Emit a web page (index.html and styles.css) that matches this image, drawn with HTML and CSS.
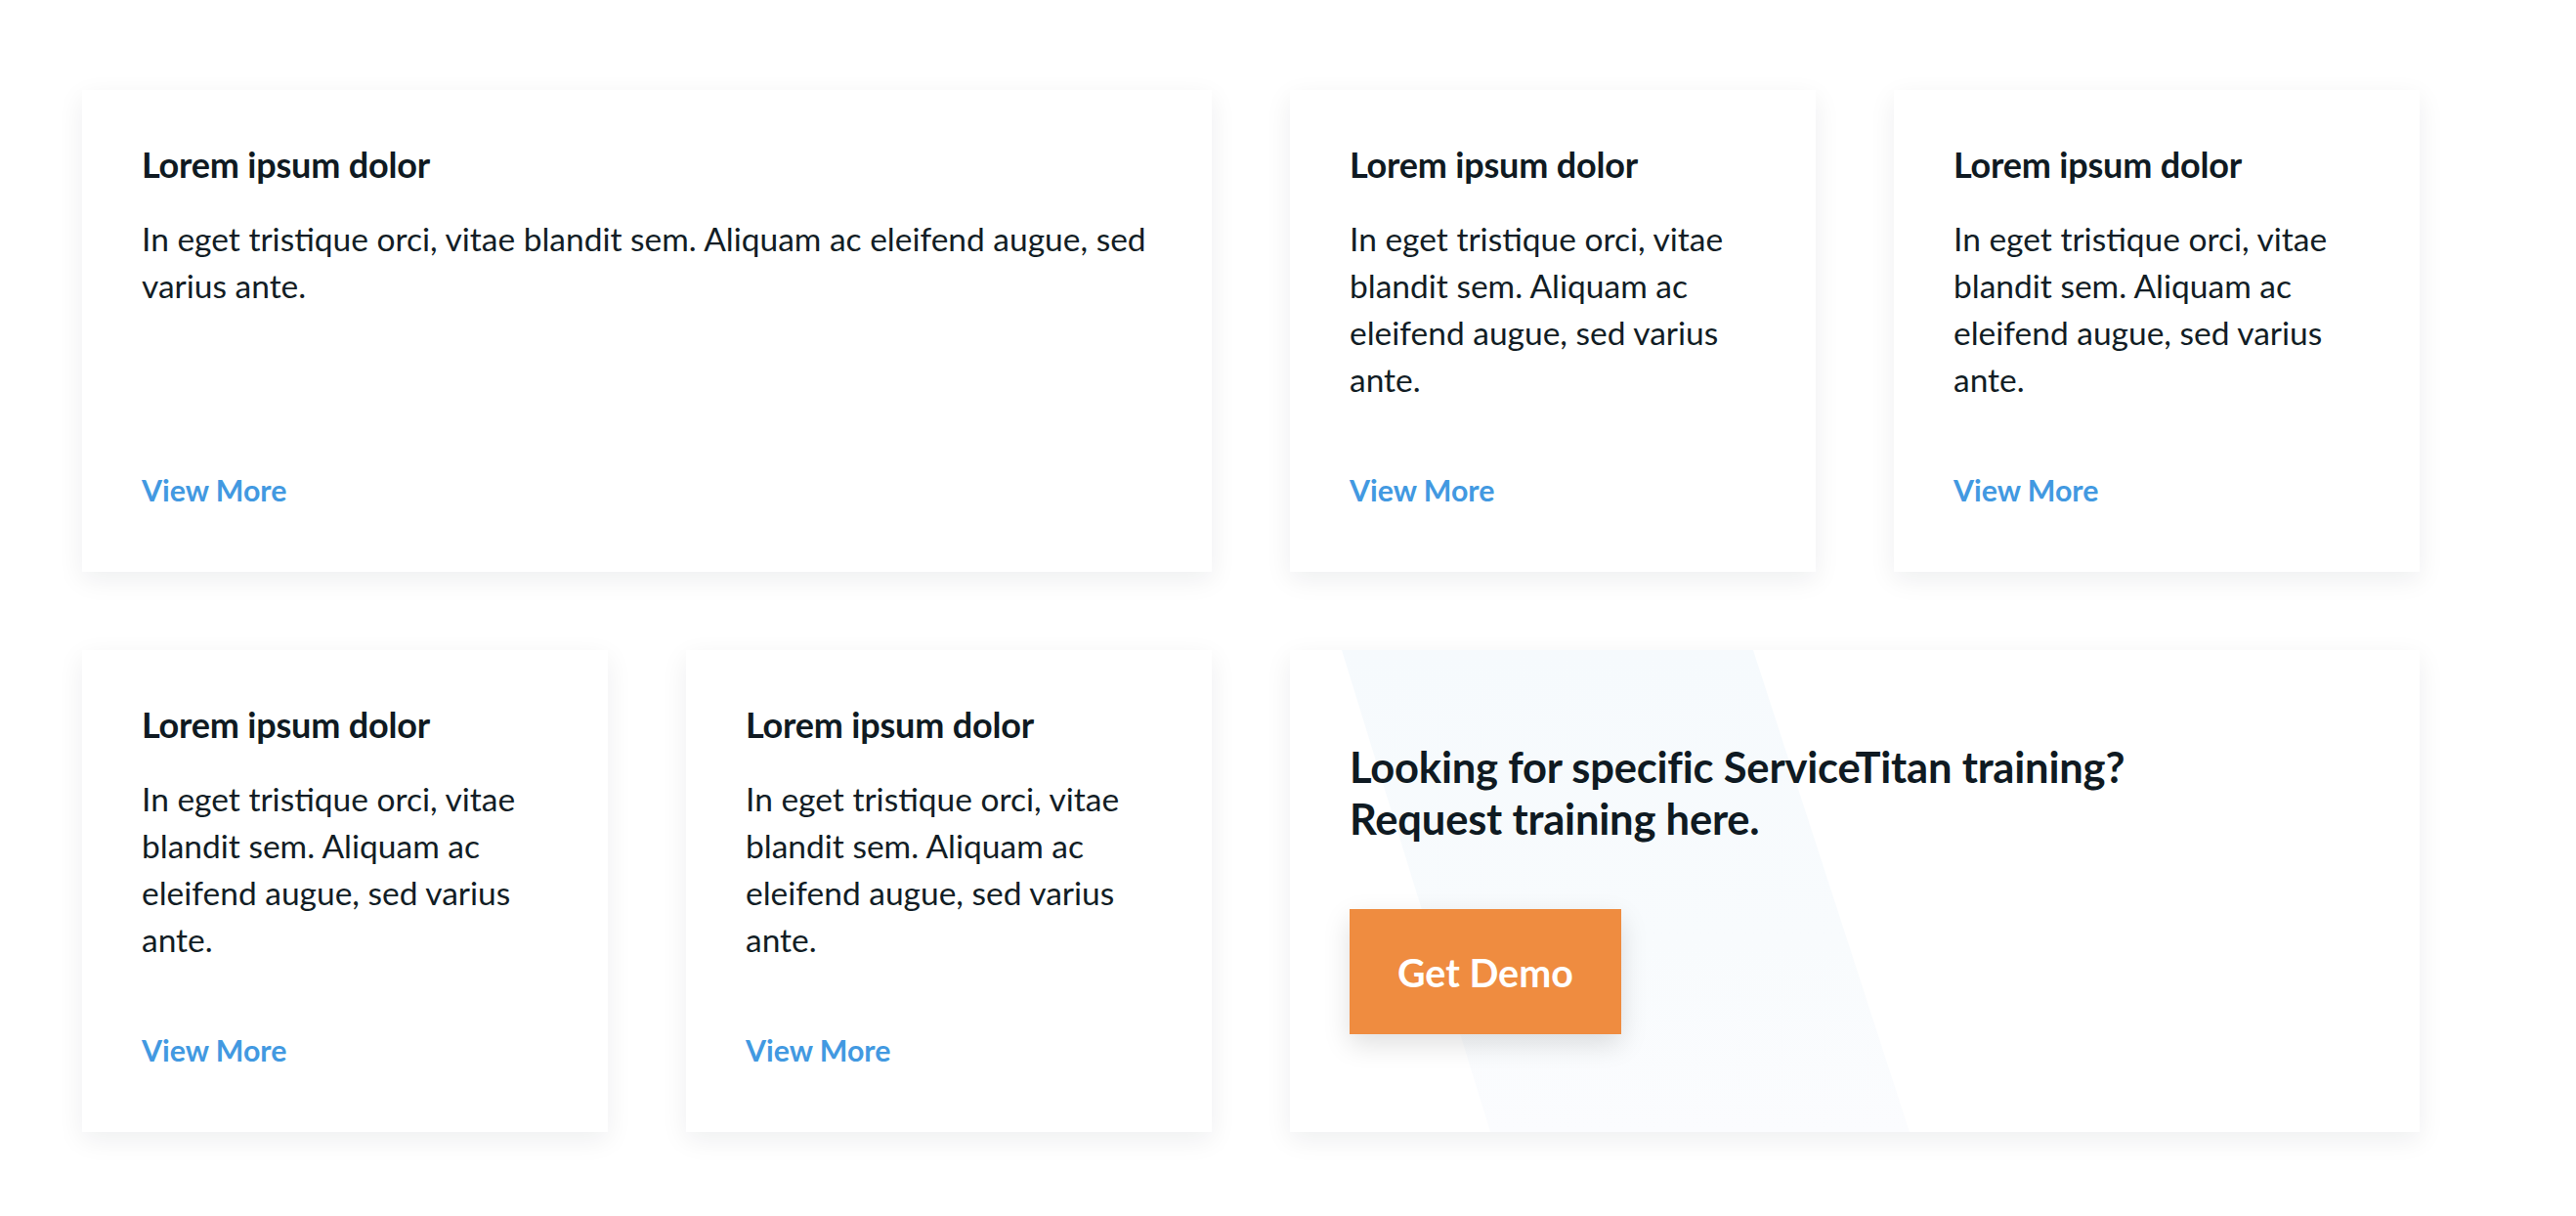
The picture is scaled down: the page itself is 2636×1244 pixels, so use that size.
FILE: index.html
```html
<!DOCTYPE html>
<html lang="en">
<head>
<meta charset="utf-8">
<title>Training</title>
<link rel="stylesheet" href="styles.css">
</head>
<body>
<main class="page">
  <section class="grid">
    <article class="card card-wide">
      <h3 class="card-title">Lorem ipsum dolor</h3>
      <p class="card-text">In eget tristique orci, vitae blandit sem. Aliquam ac eleifend augue, sed varius ante.</p>
      <a class="card-link" href="#">View More</a>
    </article>
    <article class="card">
      <h3 class="card-title">Lorem ipsum dolor</h3>
      <p class="card-text">In eget tristique orci, vitae blandit sem. Aliquam ac eleifend augue, sed varius ante.</p>
      <a class="card-link" href="#">View More</a>
    </article>
    <article class="card">
      <h3 class="card-title">Lorem ipsum dolor</h3>
      <p class="card-text">In eget tristique orci, vitae blandit sem. Aliquam ac eleifend augue, sed varius ante.</p>
      <a class="card-link" href="#">View More</a>
    </article>
    <article class="card">
      <h3 class="card-title">Lorem ipsum dolor</h3>
      <p class="card-text">In eget tristique orci, vitae blandit sem. Aliquam ac eleifend augue, sed varius ante.</p>
      <a class="card-link" href="#">View More</a>
    </article>
    <article class="card">
      <h3 class="card-title">Lorem ipsum dolor</h3>
      <p class="card-text">In eget tristique orci, vitae blandit sem. Aliquam ac eleifend augue, sed varius ante.</p>
      <a class="card-link" href="#">View More</a>
    </article>
    <article class="card card-wide card-cta">
      <div class="cta-shape"></div>
      <h2 class="cta-title">Looking for specific ServiceTitan training?<br>Request training here.</h2>
      <a class="cta-button" href="#">Get Demo</a>
    </article>
  </section>
</main>
</body>
</html>
```
FILE: styles.css
```css
* { box-sizing: border-box; }

html, body {
  margin: 0;
  padding: 0;
  background: #ffffff;
}

body {
  font-family: "Lato", "Liberation Sans", sans-serif;
  color: #101b23;
  min-height: 1244px;
}

.page {
  padding: 92px 0 85px 84px;
}

.grid {
  display: grid;
  grid-template-columns: repeat(4, 538px);
  column-gap: 80px;
  row-gap: 80px;
}

.card {
  background: #ffffff;
  box-shadow: 0 8px 26px rgba(20, 30, 40, 0.07);
  padding: 54px 61px 66px 61px;
  display: flex;
  flex-direction: column;
  align-items: flex-start;
}

.card-wide {
  grid-column: span 2;
}

.card-title {
  margin: 0 0 30px 0;
  font-size: 36px;
  line-height: 44px;
  font-weight: 700;
  color: #0f1a22;
  letter-spacing: -0.2px;
}

.card-text {
  margin: 0 0 71px 0;
  font-size: 33.5px;
  line-height: 48px;
  font-weight: 400;
  color: #121d25;
}

.card-link {
  margin-top: auto;
  font-size: 30.3px;
  line-height: 36px;
  font-weight: 700;
  color: #4299e1;
  text-decoration: none;
}

.card-cta {
  position: relative;
  overflow: hidden;
  padding: 93px 61px 66px 61px;
}

.cta-shape {
  position: absolute;
  inset: 0;
  background: linear-gradient(to bottom, #f6fafd 0%, #f8fbfd 60%, #fbfcfe 100%);
  clip-path: polygon(53px 0, 474px 0, 634px 100%, 205px 100%);
  z-index: 0;
}

.cta-title {
  position: relative;
  z-index: 1;
  margin: 0 0 66px 0;
  font-size: 43.5px;
  line-height: 53px;
  font-weight: 700;
  color: #0f1a22;
  letter-spacing: -0.2px;
}

.cta-button {
  position: relative;
  z-index: 1;
  display: inline-flex;
  align-items: center;
  justify-content: center;
  height: 128px;
  padding: 0 49px;
  background: #ef8c40;
  color: #ffffff;
  font-size: 39.4px;
  font-weight: 700;
  text-decoration: none;
  box-shadow: 0 10px 26px rgba(0, 0, 0, 0.13);
}
```
